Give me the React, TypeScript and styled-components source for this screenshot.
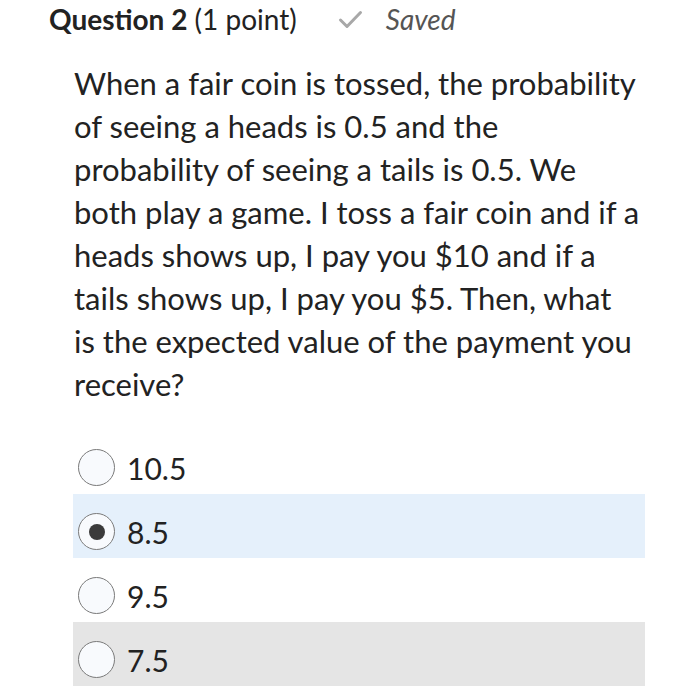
import React from "react";
import styled, { createGlobalStyle } from "styled-components";

const Global = createGlobalStyle`
  html, body { margin: 0; padding: 0; background: #ffffff; }
  body { font-family: Lato, "Noto Sans", sans-serif; color: #2d3b45; }
`;

const Page = styled.div`
  width: 683px;
  height: 700px;
  overflow: hidden;
  background: #fff;
`;

const Header = styled.div`
  display: flex;
  align-items: center;
  padding: 1px 0 0 49px;
  height: 36px;
`;

const Title = styled.h2`
  margin: 0;
  font-size: 28px;
  font-weight: 400;
  color: #222;
  line-height: 34px;
`;

const Strong = styled.span`
  font-weight: 700;
`;

const Status = styled.div`
  display: flex;
  align-items: center;
  margin-left: 41px;
  gap: 23px;
`;

const SavedText = styled.span`
  font-style: italic;
  font-size: 28px;
  color: #555;
`;

const Body = styled.div`
  padding: 25px 30px 0 74px;
`;

const Prompt = styled.p`
  margin: 0;
  font-size: 31px;
  line-height: 43px;
  color: #222;
  max-width: 571px;
`;

const Options = styled.div`
  margin-top: 24px;
  width: 572px;
  margin-left: -1px;
  display: flex;
  flex-direction: column;
`;

const Row = styled.label<{ $bg: string }>`
  box-sizing: border-box;
  display: flex;
  align-items: center;
  height: 64px;
  padding: 11px 0 0 5px;
  background: ${(p) => p.$bg};
  gap: 12px;
`;

const Radio = styled.span<{ $checked: boolean }>`
  box-sizing: border-box;
  width: 37px;
  height: 37px;
  border-radius: 50%;
  border: 1.5px solid #7a7a7a;
  background: #f8fafd;
  display: flex;
  align-items: center;
  justify-content: center;
  &::after {
    content: "";
    display: ${(p) => (p.$checked ? "block" : "none")};
    width: 16px;
    height: 16px;
    border-radius: 50%;
    background: #3b3b3b;
  }
`;

const OptionText = styled.span`
  font-size: 30px;
  color: #222;
`;

const options = [
  { label: "10.5", bg: "transparent", checked: false },
  { label: "8.5", bg: "#e5f0fb", checked: true },
  { label: "9.5", bg: "transparent", checked: false },
  { label: "7.5", bg: "#e5e5e5", checked: false },
];

export default function App() {
  return (
    <Page>
      <Global />
      <Header>
        <Title>
          <Strong>Question 2</Strong> (1 point)
        </Title>
        <Status>
          <svg width="25" height="19" viewBox="0 0 25 19">
            <path d="M2.5 10 L9 16.5 L22.5 2.5" fill="none" stroke="#a8a8a8" strokeWidth="3" strokeLinecap="round" strokeLinejoin="round" />
          </svg>
          <SavedText>Saved</SavedText>
        </Status>
      </Header>
      <Body>
        <Prompt>
          When a fair coin is tossed, the probability of seeing a heads is 0.5 and the probability of seeing a tails is 0.5. We both play a game. I toss a fair coin and if a heads shows up, I pay you $10 and if a tails shows up, I pay you $5. Then, what
          <br />
          is the expected value of the payment you receive?
        </Prompt>
        <Options>
          {options.map((o) => (
            <Row key={o.label} $bg={o.bg}>
              <Radio $checked={o.checked} />
              <OptionText>{o.label}</OptionText>
            </Row>
          ))}
        </Options>
      </Body>
    </Page>
  );
}
